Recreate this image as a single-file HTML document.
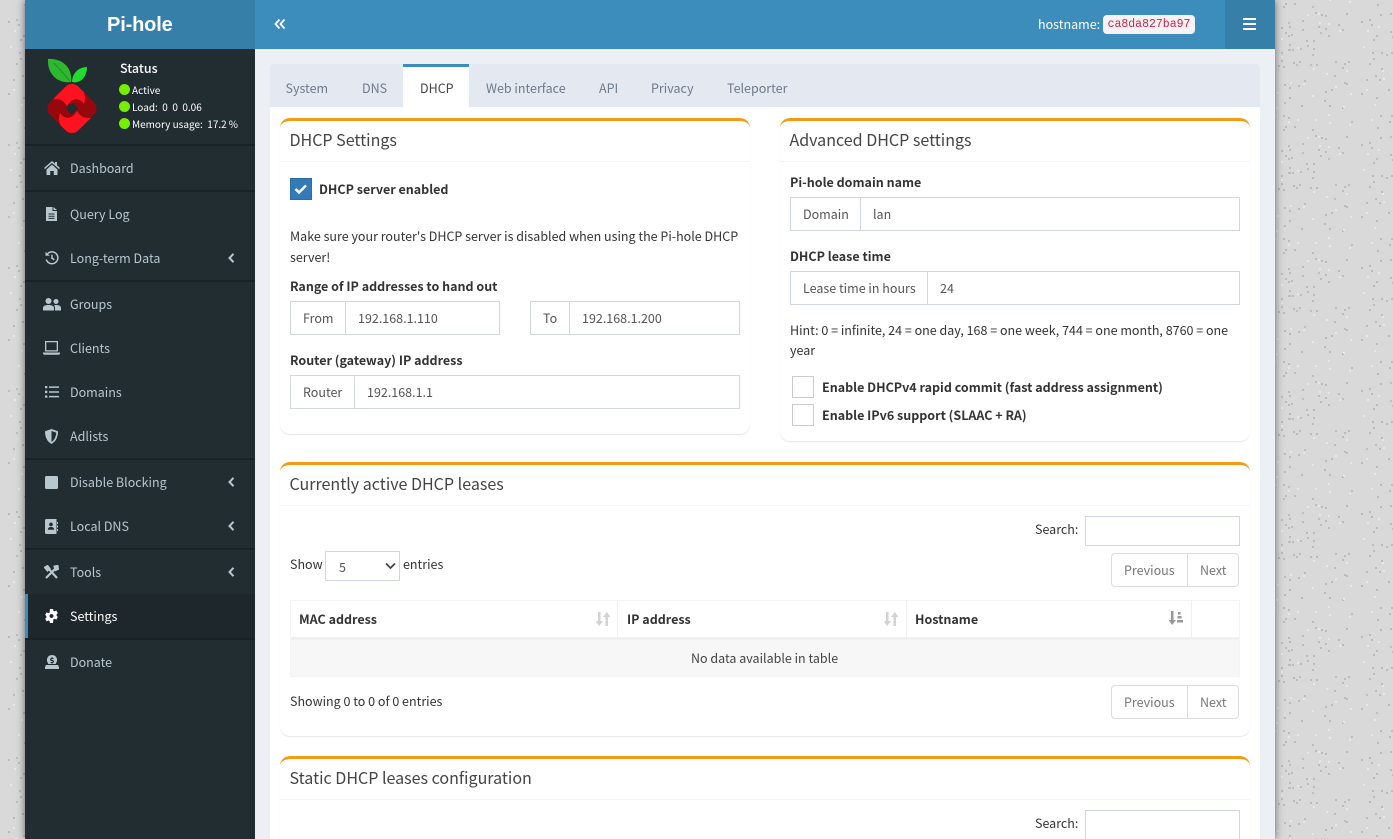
<!DOCTYPE html>
<html lang="en"><head><meta charset="utf-8"><title>Pi-hole</title>
<style>
html,body{margin:0;padding:0;width:1393px;height:839px;overflow:hidden;background:#d9d9d9}
body{position:relative;font-family:"Noto Sans CJK JP","Liberation Sans",sans-serif;font-size:12.5px;color:#333}
.a{position:absolute;box-sizing:border-box}
.t{position:absolute;white-space:nowrap;line-height:20px}
.b{font-weight:700}
.nav{color:#b8c7ce;left:70px}
.ic{position:absolute;fill:#b8c7ce}
.tab{color:#6f7a8a;top:78px}
.h3{font-size:16.05px;color:#444;line-height:24px}
.box{position:absolute;box-sizing:border-box;background:#fff;border-top:3px solid #f39c12;border-radius:10px;box-shadow:0 1px 1px rgba(0,0,0,.1)}
.ln{position:absolute;height:1px;background:#f4f4f4}
.ig{position:absolute;box-sizing:border-box;border:1px solid #d2d6e0;height:34px;background:#fff}
.ig i{position:absolute;left:0;top:0;bottom:0;border-right:1px solid #d2d6e0}
.ck{position:absolute;box-sizing:border-box;width:22px;height:22px;border:1px solid #ccc;background:#fff}
.sep{position:absolute;left:25px;width:230px;height:2px;background:#1a2226}
.g{color:#555}
.dot{position:absolute;width:11px;height:11px;border-radius:50%;background:#76ee00;left:119px}
.s{color:#fff;font-size:10px}
.pg{position:absolute;box-sizing:border-box;width:128px;height:34px;left:1111px;border:1px solid #ddd;border-radius:4px;background:#fff}
.pg i{position:absolute;left:75px;top:0;bottom:0;width:1px;background:#ddd}
.mut{color:#777}
</style></head><body>
<svg class="a" style="left:0;top:0" width="1393" height="839">
<defs><pattern id="n" width="123" height="123" patternUnits="userSpaceOnUse" x="1" y="10">
<path fill="#bcbcbc" d="M7 11h2v2H7zM15 9h2v2h-2zM17 14h2v2h-2zM26 4h2v2h-2zM36 3h2v2h-2zM41 3h2v2h-2zM39 10h2v2h-2zM50 17h2v2h-2zM57 12h2v2h-2zM58 16h2v2h-2zM54 22h2v2h-2zM60 24h2v2h-2zM57 25h2v2h-2zM71 10h2v2h-2zM71 19h2v2h-2zM84 2h2v2h-2zM90 4h2v2h-2zM94 5h2v2h-2zM115 3h2v2h-2zM87 16h2v2h-2zM94 18h2v2h-2zM89 22h2v2h-2zM97 25h2v2h-2zM107 14h2v2h-2zM111 19h2v2h-2zM22 25h2v2h-2zM36 21h2v2h-2zM38 26h2v2h-2zM19 29h2v2h-2zM39 34h2v2h-2zM39 39h2v2h-2zM58 34h2v2h-2zM58 39h2v2h-2zM75 30h2v2h-2zM82 30h2v2h-2zM76 35h2v2h-2zM82 38h2v2h-2zM18 42h2v2h-2zM27 42h2v2h-2zM32 44h2v2h-2zM37 42h2v2h-2zM50 42h2v2h-2zM57 39h2v2h-2zM61 39h2v2h-2zM69 38h2v2h-2zM81 44h2v2h-2zM19 48h2v2h-2zM50 50h2v2h-2zM47 55h2v2h-2zM52 56h2v2h-2zM62 52h2v2h-2zM65 54h2v2h-2zM68 51h2v2h-2zM79 54h2v2h-2zM85 54h2v2h-2zM104 51h2v2h-2zM113 53h2v2h-2zM117 51h2v2h-2zM111 57h2v2h-2zM15 53h2v2h-2zM27 58h2v2h-2zM21 65h2v2h-2zM12 69h2v2h-2zM25 69h2v2h-2zM39 68h2v2h-2zM58 77h2v2h-2zM53 74h2v2h-2zM73 70h2v2h-2zM67 75h2v2h-2zM103 65h2v2h-2zM113 72h2v2h-2zM115 73h2v2h-2zM94 81h2v2h-2zM100 79h2v2h-2zM34 79h2v2h-2zM22 87h2v2h-2zM7 83h2v2h-2zM58 87h2v2h-2zM53 92h2v2h-2zM70 95h2v2h-2zM93 90h2v2h-2zM111 97h2v2h-2zM98 95h2v2h-2zM41 97h2v2h-2zM26 105h2v2h-2zM37 105h2v2h-2zM52 105h2v2h-2zM57 107h2v2h-2zM35 111h2v2h-2zM23 117h2v2h-2zM54 116h2v2h-2zM63 116h2v2h-2zM52 119h2v2h-2zM81 119h2v2h-2zM120 111h2v2h-2z"/>
<path fill="#e8e8e8" d="M76 4h2v2h-2zM87 3h2v2h-2zM97 13h2v2h-2zM13 20h2v2h-2zM24 16h2v2h-2zM50 28h2v2h-2zM66 37h2v2h-2zM88 12h2v2h-2zM108 20h2v2h-2zM9 36h2v2h-2zM41 50h2v2h-2zM50 46h2v2h-2zM82 58h2v2h-2zM95 63h2v2h-2zM115 60h2v2h-2zM28 60h2v2h-2zM29 68h2v2h-2zM12 79h2v2h-2zM46 82h2v2h-2zM59 72h2v2h-2zM72 73h2v2h-2zM81 85h2v2h-2zM104 76h2v2h-2zM119 83h2v2h-2zM20 94h2v2h-2zM45 97h2v2h-2zM97 104h2v2h-2zM112 96h2v2h-2zM17 109h2v2h-2zM43 105h2v2h-2zM57 111h2v2h-2zM66 109h2v2h-2zM84 109h2v2h-2zM98 112h2v2h-2zM118 114h2v2h-2zM40 121h2v2h-2z"/>
</pattern></defs>
<rect width="1393" height="839" fill="#d9d9d9"/><rect width="1393" height="839" fill="url(#n)"/></svg>

<div class="a" style="left:25px;top:0;width:1250px;height:839px;background:#ecf0f5;box-shadow:0 0 8px rgba(0,0,0,.55)"></div>
<div class="a" style="left:25px;top:0;width:230px;height:839px;background:#222d32"></div>
<div class="a" style="left:25px;top:0;width:230px;height:49px;background:#367fa9"></div>
<div class="a" style="left:255px;top:0;width:1020px;height:49px;background:#3c8dbc"></div>
<div class="a" style="left:1225px;top:0;width:50px;height:49px;background:#367fa9"></div>

<div class="t" style="left:107px;top:14.500px;font-family:'Liberation Sans',sans-serif;font-size:20px;font-weight:700;color:#fff;letter-spacing:-.15px">Pi-hole</div>
<svg class="a" style="left:274px;top:18px" width="12" height="12" viewBox="0 0 12 12" fill="none" stroke="#fff" stroke-width="1.8"><path d="M5.500 1.500 1.500 6l4 4.500M10.500 1.500 6.500 6l4 4.500"/></svg>
<div class="t" style="left:1038px;top:14px;color:#fff">hostname:</div>
<div class="a" style="left:1103px;top:15px;width:92px;height:19px;border-radius:4px;background:#f9f2f4;color:#c7254e;font:11.5px/19px 'Liberation Mono',monospace;text-align:center">ca8da827ba97</div>
<svg class="a" style="left:1243px;top:17px" width="14" height="14"><path fill="#fff" d="M0 1h13v2H0zM0 6h13v2H0zM0 11h13v2H0z"/></svg>

<!-- logo -->
<svg class="a" style="left:40px;top:55px" width="64" height="84" viewBox="40 55 64 84">
<defs><clipPath id="dm"><rect x="52" y="88.500" width="40" height="40" rx="9" transform="rotate(45 72 108.500)"/></clipPath></defs>
<path fill="#2fb82f" d="M48 59C62 58 73 68 71 82C58 84 47 74 48 59Z"/>
<path fill="#1fdc2f" d="M87 67C87 77 80 84 72 82C72 74 78 67 87 67Z"/>
<path fill="none" stroke="#158a1e" stroke-width=".8" d="M54 63 70 81"/>
<g clip-path="url(#dm)">
<rect x="40" y="78" width="64" height="60" fill="#96070e"/>
<path fill="#ff1220" d="M44 104C52 97 62 97 67 106L70 102C74 98 80 98 84 104C86 98 85 93 81 88L72 78Z"/>
<path fill="#ff1220" transform="rotate(180 72 108.500)" d="M44 104C52 97 62 97 67 106L70 102C74 98 80 98 84 104C86 98 85 93 81 88L72 78Z"/>
</g>
<rect x="67.500" y="104" width="9" height="9" rx="2" transform="rotate(45 72 108.500)" fill="#222d32"/>
</svg>

<div class="t" style="left:120px;top:58px;color:#fff;font-size:12.5px;font-weight:500">Status</div>
<div class="dot" style="top:84px"></div><div class="dot" style="top:101px"></div><div class="dot" style="top:118px"></div>
<div class="t s" style="left:132px;top:80px">Active</div>
<div class="t s" style="left:132px;top:97px">Load:&nbsp; 0&nbsp; 0&nbsp; 0.06</div>
<div class="t s" style="left:132px;top:114px">Memory usage:&nbsp; 17.2&thinsp;%</div>

<!-- sidebar separators -->
<div class="sep" style="top:144px"></div><div class="sep" style="top:190px"></div><div class="sep" style="top:280px"></div><div class="sep" style="top:458px"></div><div class="sep" style="top:548px"></div><div class="sep" style="top:638px"></div>
<div class="a" style="left:25px;top:594px;width:230px;height:44px;background:#1e282c;border-left:3px solid #3c8dbc"></div>

<div class="t nav" style="top:158px">Dashboard</div>
<div class="t nav" style="top:204px">Query Log</div>
<div class="t nav" style="top:248px">Long-term Data</div>
<div class="t nav" style="top:294px">Groups</div>
<div class="t nav" style="top:338px">Clients</div>
<div class="t nav" style="top:382px">Domains</div>
<div class="t nav" style="top:426px">Adlists</div>
<div class="t nav" style="top:472px">Disable Blocking</div>
<div class="t nav" style="top:516px">Local DNS</div>
<div class="t nav" style="top:562px">Tools</div>
<div class="t nav" style="top:606px;color:#fff">Settings</div>
<div class="t nav" style="top:652px">Donate</div>

<!-- icons -->
<svg class="ic" style="left:44px;top:161px" width="16" height="14" viewBox="0 0 16 14"><path d="M8 0 0 7l1 1 7-6 7 6 1-1-3-2.700V1h-2v1.600zM2.500 8.500 8 3.600l5.500 4.900V14H9.800V10H6.200v4H2.500z"/></svg>
<svg class="ic" style="left:46px;top:207px" width="11" height="14" viewBox="0 0 11 14"><path fill-rule="evenodd" d="M0 0h6.500v4H11v10H0zM7.500 0 11 3H7.500zM2.500 6.500v1h6v-1zM2.500 8.700v1h6v-1zM2.500 10.900v1h6v-1z"/></svg>
<svg class="a" style="left:45px;top:251px" width="14" height="14" viewBox="0 0 14 14" fill="none" stroke="#b8c7ce" stroke-width="1.500"><path d="M2.300 3.200A5.900 5.900 0 1 1 1.300 8.500M7 3.800V7.300l2.300 1.500"/><path fill="#b8c7ce" stroke="none" d="M.5 .8 4.800 4.800H.5z"/></svg>
<svg class="ic" style="left:43px;top:298px" width="18" height="13" viewBox="0 0 18 13"><circle cx="5.500" cy="3" r="3"/><circle cx="13" cy="3.500" r="2.500"/><path d="M0 12V10C0 8 2 7 5.500 7S11 8 11 10v2.500H.5zM12 12.500V10c0-1-.3-1.800-1-2.600 .7-.3 1.400-.4 2-.4 3 0 5 1 5 3v2.500z"/></svg>
<svg class="ic" style="left:43px;top:341px" width="17" height="14" viewBox="0 0 17 14"><path fill-rule="evenodd" d="M2 0h13v10.500H2zM3.300 1.300v7.900h10.400V1.300zM0 11.500h17v1.200l-1 1H1l-1-1z"/></svg>
<svg class="ic" style="left:45px;top:386px" width="14" height="12" viewBox="0 0 14 12"><path d="M0 0h2.300v2.300H0zM0 4.800h2.300v2.300H0zM0 9.500h2.300v2.300H0zM4 .4h10v1.500H4zM4 5.200h10v1.500H4zM4 9.900h10v1.500H4z"/></svg>
<svg class="ic" style="left:45px;top:429px" width="13" height="15" viewBox="0 0 13 15"><path fill-rule="evenodd" d="M6.500 0 13 2.300C13 8 11 12.500 6.500 15 2 12.500 0 8 0 2.300zM6.500 2 6.500 13C9.500 11 11 7.500 11.200 3.600z"/></svg>
<svg class="ic" style="left:45px;top:476px" width="13" height="13"><rect width="13" height="13" rx="1.500"/></svg>
<svg class="ic" style="left:45px;top:519px" width="13" height="15" viewBox="0 0 13 15"><path fill-rule="evenodd" d="M1.500 0h10v15h-10A1.500 1.500 0 0 1 0 13.500V1.500A1.500 1.500 0 0 1 1.500 0zM6 3.500a1.900 1.900 0 1 0 .01 0zM2.800 10.800h6.400c0-2-1.300-2.800-3.200-2.800s-3.200 .8-3.200 2.800z"/><path d="M12 3h1v2h-1zM12 6.500h1v2h-1zM12 10h1v2h-1z"/></svg>
<svg class="a" style="left:44px;top:565px" width="15" height="15" viewBox="0 0 15 15" stroke="#b8c7ce" fill="none"><path stroke-width="2.200" d="M2 13 11 4M4 3l9 10"/><path stroke-width="2" d="M1 2.500 3.500 1 5.500 3.500 3.500 5.500zM10.500 1.500 13.500 .8 14 4 11.500 5z" fill="#b8c7ce"/></svg>
<svg class="ic" style="left:45px;top:609px" width="13" height="14" viewBox="0 0 13 14"><path fill="#fff" fill-rule="evenodd" d="M5 0h3l.4 1.800 1.300.6L11.300 1.500l1.500 2.600-1.200 1.300v1.300l1.200 1.300-1.500 2.600-1.600-.9-1.300.6L8 14H5l-.4-1.900-1.300-.6-1.600.9L.2 9.800l1.200-1.300V7.200L.2 5.900l1.500-2.600 1.600.9 1.300-.6zM6.500 5a2 2 0 1 0 .01 0z"/></svg>
<svg class="ic" style="left:45px;top:655px" width="14" height="14" viewBox="0 0 14 14"><path fill-rule="evenodd" d="M7 0a5 5 0 0 1 3.800 8.300L11 9H3l.2-.7A5 5 0 0 1 7 0zM6.500 2v1C5.500 3.200 5 3.800 5 4.500S5.500 5.700 6.500 6l1 .3c.3.100.4.500 0 .6H5.500v1h1v.8h1V8c1-.2 1.500-.8 1.500-1.500S8.500 5.300 7.500 5l-1-.3c-.3-.1-.4-.5 0-.6h2v-1h-1V2zM1 10h12l1 2v2H0v-2z"/></svg>

<!-- chevrons -->
<svg class="a" style="left:227px;top:253px" width="9" height="10" fill="none" stroke="#b8c7ce" stroke-width="2"><path d="M6.500 .8 2.500 5l4 4.200"/></svg>
<svg class="a" style="left:227px;top:477px" width="9" height="10" fill="none" stroke="#b8c7ce" stroke-width="2"><path d="M6.500 .8 2.500 5l4 4.200"/></svg>
<svg class="a" style="left:227px;top:521px" width="9" height="10" fill="none" stroke="#b8c7ce" stroke-width="2"><path d="M6.500 .8 2.500 5l4 4.200"/></svg>
<svg class="a" style="left:227px;top:567px" width="9" height="10" fill="none" stroke="#b8c7ce" stroke-width="2"><path d="M6.500 .8 2.500 5l4 4.200"/></svg>

<!-- tabs -->
<div class="a" style="left:270px;top:64px;width:990px;height:775px;background:#fff;border-radius:3px 3px 0 0"></div>
<div class="a" style="left:270px;top:64px;width:990px;height:43px;background:#e4e8f0;border-radius:3px 3px 0 0"></div>
<div class="a" style="left:403px;top:64px;width:66px;height:44px;background:#fff;border-top:3px solid #3c8dbc"></div>
<div class="t tab" style="left:285.500px">System</div>
<div class="t tab" style="left:362px">DNS</div>
<div class="t tab" style="left:420px;color:#444">DHCP</div>
<div class="t tab" style="left:486px">Web interface</div>
<div class="t tab" style="left:599px">API</div>
<div class="t tab" style="left:651px">Privacy</div>
<div class="t tab" style="left:727px">Teleporter</div>

<!-- boxes -->
<div class="box" style="left:280px;top:118px;width:470px;height:316px"></div>
<div class="box" style="left:780px;top:118px;width:470px;height:323px"></div>
<div class="box" style="left:280px;top:462px;width:970px;height:274px"></div>
<div class="box" style="left:280px;top:756px;width:970px;height:120px"></div>
<div class="ln" style="left:280px;top:161px;width:470px"></div>
<div class="ln" style="left:780px;top:161px;width:470px"></div>
<div class="ln" style="left:280px;top:505px;width:970px"></div>
<div class="ln" style="left:280px;top:799px;width:970px"></div>

<div class="t h3" style="left:289.500px;top:127px">DHCP Settings</div>
<div class="t h3" style="left:789.500px;top:127px">Advanced DHCP settings</div>
<div class="t h3" style="left:289.500px;top:471px">Currently active DHCP leases</div>
<div class="t h3" style="left:289.500px;top:765px">Static DHCP leases configuration</div>

<!-- left form -->
<div class="a" style="left:290px;top:178px;width:22px;height:22px;background:#337ab7;border:1px solid #2e6da4"></div>
<svg class="a" style="left:294px;top:183px" width="14" height="12" fill="none" stroke="#fff" stroke-width="2.400"><path d="M1.500 6 5 9.500 12 2.500"/></svg>
<div class="t b" style="left:319px;top:179px">DHCP server enabled</div>
<div class="t" style="left:290px;top:226px">Make sure your router's DHCP server is disabled when using the Pi-hole DHCP</div>
<div class="t" style="left:290px;top:247px">server!</div>
<div class="t b" style="left:290px;top:276px">Range of IP addresses to hand out</div>
<div class="ig" style="left:290px;top:301px;width:210px"><i style="width:54px"></i></div>
<div class="ig" style="left:530px;top:301px;width:210px"><i style="width:38px"></i></div>
<div class="t g" style="left:303px;top:308px">From</div>
<div class="t g" style="left:358px;top:308px">192.168.1.110</div>
<div class="t g" style="left:543px;top:308px">To</div>
<div class="t g" style="left:582px;top:308px">192.168.1.200</div>
<div class="t b" style="left:290px;top:350px">Router (gateway) IP address</div>
<div class="ig" style="left:290px;top:375px;width:450px"><i style="width:63px"></i></div>
<div class="t g" style="left:303px;top:382px">Router</div>
<div class="t g" style="left:367px;top:382px">192.168.1.1</div>

<!-- right form -->
<div class="t b" style="left:790px;top:172px">Pi-hole domain name</div>
<div class="ig" style="left:790px;top:197px;width:450px"><i style="width:69px"></i></div>
<div class="t g" style="left:803px;top:204px">Domain</div>
<div class="t g" style="left:873px;top:204px">lan</div>
<div class="t b" style="left:790px;top:246px">DHCP lease time</div>
<div class="ig" style="left:790px;top:271px;width:450px"><i style="width:136px"></i></div>
<div class="t g" style="left:803px;top:278px">Lease time in hours</div>
<div class="t g" style="left:940px;top:278px">24</div>
<div class="t" style="left:790px;top:320px">Hint: 0 = infinite, 24 = one day, 168 = one week, 744 = one month, 8760 = one</div>
<div class="t" style="left:790px;top:340px">year</div>
<div class="ck" style="left:792px;top:376px"></div>
<div class="ck" style="left:792px;top:404px"></div>
<div class="t b" style="left:822px;top:377px">Enable DHCPv4 rapid commit (fast address assignment)</div>
<div class="t b" style="left:822px;top:405px">Enable IPv6 support (SLAAC + RA)</div>

<!-- leases -->
<div class="t" style="left:1035px;top:519px">Search:</div>
<div class="ig" style="left:1085px;top:516px;width:155px;height:30px"></div>
<div class="pg" style="top:553px"><i></i></div>
<div class="t mut" style="left:1124px;top:560px">Previous</div>
<div class="t mut" style="left:1200px;top:560px">Next</div>
<div class="t" style="left:290px;top:554px">Show</div>
<div class="ig" style="left:325px;top:551px;width:75px;height:30px"></div>
<div class="t g" style="left:339px;top:557px">5</div>
<svg class="a" style="left:385px;top:562px" width="11" height="8" fill="none" stroke="#444" stroke-width="1.800"><path d="M1 1.500 5.500 6 10 1.500"/></svg>
<div class="t" style="left:403px;top:554px">entries</div>

<div class="a" style="left:290px;top:600px;width:950px;height:77px;border:1px solid #f4f4f4"></div>
<div class="a" style="left:291px;top:637px;width:948px;height:3px;background:#f0f0f0"></div>
<div class="a" style="left:291px;top:640px;width:948px;height:36px;background:#f7f7f7"></div>
<div class="a" style="left:617px;top:600px;width:1px;height:37px;background:#f0f0f0"></div>
<div class="a" style="left:906px;top:600px;width:1px;height:37px;background:#f0f0f0"></div>
<div class="a" style="left:1191px;top:600px;width:1px;height:37px;background:#f0f0f0"></div>
<div class="t b" style="left:299px;top:609px">MAC address</div>
<div class="t b" style="left:627px;top:609px">IP address</div>
<div class="t b" style="left:915px;top:609px">Hostname</div>
<svg class="a" style="left:596px;top:612px" width="14" height="14" fill="#d3d3d3"><path d="M2 0h2.500v9H7L3.200 14-.5 9H2zM9.500 14h2.500V5h2.500L10.800 0 7 5h2.500z"/></svg>
<svg class="a" style="left:884px;top:612px" width="14" height="14" fill="#d3d3d3"><path d="M2 0h2.500v9H7L3.200 14-.5 9H2zM9.500 14h2.500V5h2.500L10.800 0 7 5h2.500z"/></svg>
<svg class="a" style="left:1169px;top:611px" width="14" height="15" fill="#999"><path d="M2 0h2.500v9H7L3.200 14-.5 9H2zM9 1h2.500v2.500H9zM8.500 5h4v2.500h-4zM8 9h6v2.500H8z"/></svg>
<div class="t g" style="left:691px;top:648px;color:#444">No data available in table</div>
<div class="t" style="left:290px;top:691px">Showing 0 to 0 of 0 entries</div>
<div class="pg" style="top:685px"><i></i></div>
<div class="t mut" style="left:1124px;top:692px">Previous</div>
<div class="t mut" style="left:1200px;top:692px">Next</div>
<div class="t" style="left:1035px;top:813px">Search:</div>
<div class="ig" style="left:1085px;top:810px;width:155px;height:30px"></div>
</body></html>
